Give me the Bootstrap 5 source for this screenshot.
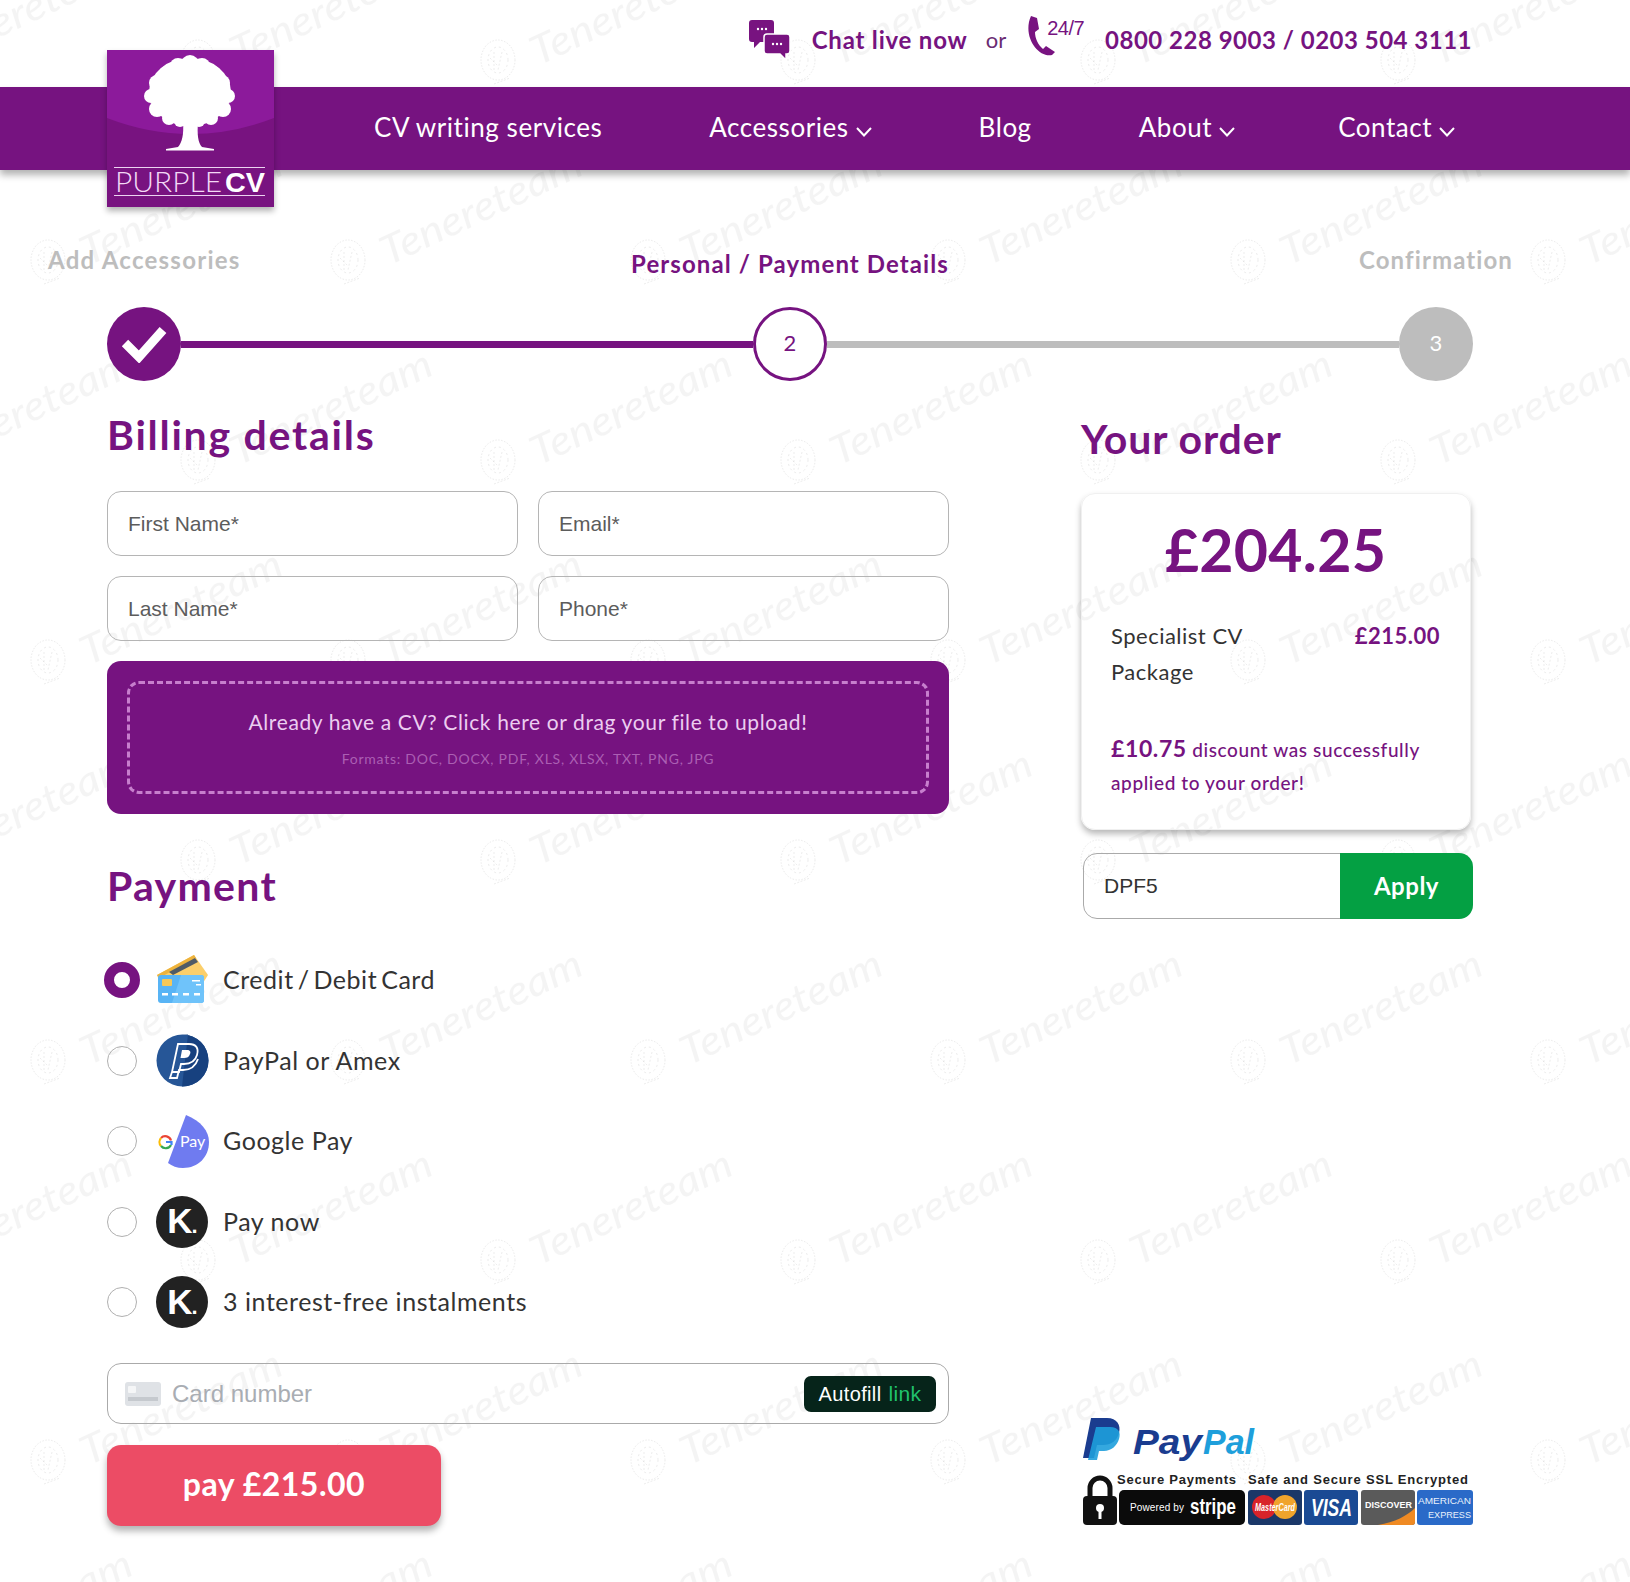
<!DOCTYPE html>
<html lang="en">
<head>
<meta charset="utf-8">
<title>PurpleCV checkout</title>
<link href="https://cdn.jsdelivr.net/npm/bootstrap@5.3.0/dist/css/bootstrap.min.css" rel="stylesheet">
<style>
:root{--pu:#761380;}
html,body{background:#fff;}
body{font-family:"Lato","Noto Sans",sans-serif;color:#333;width:1630px;height:1582px;overflow:hidden;}
.page-wrap{position:relative;z-index:0;height:1582px;overflow:hidden;}
.wm-layer{position:absolute;inset:0;z-index:-1;}
.topline{height:87px;padding:0 158px 8px 0;gap:21px;color:var(--pu);font-size:24px;}
.chat-txt{font-weight:700;letter-spacing:.8px;}
.or-txt{color:#6a2b72;font-size:22px;margin-left:-3px;}
.phone-ico{margin:-8px 0 0 -1px;}
.h247{font-family:"Liberation Sans",sans-serif;font-size:20px;letter-spacing:-.5px;margin:-24px 0 0 -30px;}
.phone-no{font-weight:700;font-size:24px;letter-spacing:.5px;}
.mainbar{height:83px;background:var(--pu);box-shadow:0 5px 7px rgba(0,0,0,.3);padding:0 0 2px 374px;}
.mainbar .nav{gap:107px;}
.mainbar .nav-link{color:#fff;font-size:26px;padding:0;line-height:1.2;display:flex;align-items:center;gap:7px;letter-spacing:.55px;}
.nav-end{margin-left:-4px;}
.logo-box{position:absolute;left:107px;top:50px;width:167px;height:157px;box-shadow:0 4px 6px rgba(0,0,0,.3);z-index:2;display:block;}
.step-labels{height:34px;margin-top:77px;padding-left:48px;padding-right:117px;font-size:24px;font-weight:700;color:#bdbdbd;letter-spacing:1.1px;}
.lbl-first{width:583px;margin-top:-8px;letter-spacing:1.25px;}
.lbl-mid{color:var(--pu);}
.lbl-last{margin-top:-8px;}
.stepper{height:74px;margin-top:26px;padding:0 157px 0 107px;}
.step-dot{width:74px;height:74px;border-radius:50%;flex:none;font-size:22px;}
.dot-done{background:var(--pu);}
.dot-now{border:3px solid var(--pu);color:var(--pu);padding-bottom:3px;}
.dot-todo{background:#bdbdbd;color:#fff;padding-bottom:3px;}
.step-line{height:7px;flex:1;background:var(--pu);}
.line-todo{background:#bdbdbd;}
.main-wrap{padding:0 157px 0 107px;margin-top:30px;height:1114px;}
.left-col{width:842px;}
.right-col{width:392px;}
.sec-title{font-size:41px;line-height:48px;font-weight:700;color:var(--pu);margin:0;letter-spacing:1.45px;}
.billing-title{letter-spacing:1.75px;}
.order-title{margin-top:4px;letter-spacing:.9px;}
.field-row{--bs-gutter-x:20px;--bs-gutter-y:20px;margin-top:12px;}
.field-box{height:65px;border-radius:14px;border:1px solid #b5b5b5;background:transparent;padding:0 20px;font-family:"Liberation Sans",sans-serif;font-size:21px;}
.field-box::placeholder{color:#5c5c5c;}
.upload-box{height:153px;margin-top:20px;background:var(--pu);border-radius:14px;padding:20px;color:#eccdf0;}
.upload-in{height:113px;border:3px dashed #c77fcd;border-radius:12px;}
.up-main{font-size:21px;letter-spacing:.62px;line-height:30px;}
.up-sub{font-size:14px;color:#ab5fb3;letter-spacing:.75px;margin-top:13px;line-height:18px;}
.pay-title{margin-top:48px;letter-spacing:1.3px;}
.pay-list{margin-top:42px;gap:24.5px;}
.pay-row{height:56px;}
.radio-cell{width:30px;flex:none;margin-right:19px;}
.radio-cell .form-check-input{width:30px;height:30px;margin:0;border:1px solid #b0b0b0;background-color:transparent;flex:none;}
.radio-cell .form-check-input:checked{width:36px;height:36px;margin:0 -3px;border:10px solid var(--pu);background:#fff;}
.pay-ico{width:53px;height:53px;flex:none;margin-right:14px;}
.pay-lbl{font-size:25px;letter-spacing:.55px;color:#333;}
.lbl-slash{word-spacing:-3px;}
.k-ico{width:52px;height:52px;margin-right:15px;flex:none;border-radius:50%;background:#222;color:#fff;font-family:"Liberation Sans",sans-serif;font-weight:700;font-size:35px;letter-spacing:-1px;}
.k-dot{font-size:22px;margin-top:8px;}
.stripe-field{height:61px;margin-top:33px;border:1px solid #aaa;border-radius:14px;padding:0 12px 0 17px;gap:11px;}
.cardnum{font-size:24px;font-family:"Liberation Sans",sans-serif;color:#a9adb3;}
.autofill{height:36px;width:132px;background:#06241a;border-radius:7px;color:#fff;font-size:20px;font-family:"Liberation Sans",sans-serif;letter-spacing:.35px;gap:7px;}
.autofill span{color:#20c26d;font-size:21px;}
.pay-btn{display:block;width:334px;height:81px;margin-top:21px;padding-bottom:10px;background:#ec4c65;border:0;border-radius:14px;color:#fff;font-size:32px;font-weight:700;box-shadow:0 5px 7px rgba(0,0,0,.3);letter-spacing:.5px;}
.pay-btn:hover{background:#ec4c65;color:#fff;}
.order-card{width:390px;height:337px;margin-top:30px;background:transparent;border:1px solid #f0f0f0;border-radius:14px;box-shadow:0 4px 6px rgba(0,0,0,.28);padding:20px 30px 0 29px;}
.grand{font-size:59px;line-height:72px;font-weight:700;color:var(--pu);text-align:center;letter-spacing:.3px;}
.line-item{margin-top:32px;font-size:22px;line-height:36px;letter-spacing:.5px;height:72px;}
.item-name{width:170px;}
.item-price{font-weight:700;color:var(--pu);letter-spacing:.5px;}
.disc{margin-top:43px;font-size:19px;line-height:33px;color:var(--pu);letter-spacing:.6px;font-weight:500;}
.disc b{font-size:23px;letter-spacing:.6px;line-height:1;}
.coupon{height:66px;margin-top:23px;margin-left:2px;width:390px;}
.coupon .form-control{height:66px;border:1px solid #aaa;border-radius:14px 0 0 14px;background:transparent;font-family:"Liberation Sans",sans-serif;font-size:21px;padding:0 20px;color:#333;}
.coupon .btn{width:133px;background:#04a043;border:0;border-radius:0 14px 14px 0;color:#fff;font-weight:700;font-size:24px;letter-spacing:.5px;flex:none;}
.trust{margin:auto 0 0 2px;width:390px;}
.trust-row{height:107px;display:block;width:390px;}
</style>
</head>
<body>
<div class="page-wrap">
  <svg class="wm-layer" width="1630" height="1582" aria-hidden="true">
    <defs>
      <g id="wm-text"><text transform="rotate(-25)" x="0" y="0" font-family="Lato,sans-serif" font-size="40" font-style="italic" textLength="218" lengthAdjust="spacingAndGlyphs" fill="#000" fill-opacity=".042">Tenereteam</text></g>
      <g id="wm-seal" fill="none" stroke="#000" stroke-opacity=".07"><ellipse cx="0" cy="-4" rx="17" ry="20" stroke-dasharray="1.5 1.5"/><ellipse cx="0" cy="-4" rx="10" ry="13" stroke-dasharray="2 3"/><path d="M-4 -12V8M4 -12L0 6M-8 -6L0 2" stroke-dasharray="2 2"/><path d="M-4 20L12 14" stroke-dasharray="2 1.5"/></g>
      <pattern id="wm-tile" width="300" height="400" patternUnits="userSpaceOnUse">
        <use href="#wm-seal" x="48" y="264"/><use href="#wm-text" x="88" y="266"/>
        <use href="#wm-seal" x="198" y="64"/><use href="#wm-text" x="238" y="66"/><use href="#wm-text" x="-62" y="66"/><use href="#wm-text" x="238" y="466"/><use href="#wm-text" x="-62" y="466"/>
      </pattern>
    </defs>
    <rect width="1630" height="1582" fill="url(#wm-tile)"/>
  </svg>

  <header>
    <div class="topline d-flex align-items-center justify-content-end">
      <svg width="42" height="40" viewBox="0 0 42 40" aria-hidden="true">
        <path d="M3 0H22a3 3 0 0 1 3 3V19a3 3 0 0 1-3 3H11L5 28V22H3a3 3 0 0 1-3-3V3a3 3 0 0 1 3-3z" fill="#781380"/>
        <path d="M18 14H38a3 3 0 0 1 3 3V31a3 3 0 0 1-3 3H37V40L31 34H18a3 3 0 0 1-3-3V17a3 3 0 0 1 3-3z" fill="#781380" stroke="#fff" stroke-width="1.5"/>
        <g fill="#fff"><circle cx="9" cy="9" r="1.2"/><circle cx="13" cy="9" r="1.2"/><circle cx="17" cy="9" r="1.2"/><circle cx="24" cy="24" r="1.2"/><circle cx="28" cy="24" r="1.2"/><circle cx="32" cy="24" r="1.2"/></g>
      </svg>
      <span class="chat-txt">Chat live now</span>
      <span class="or-txt">or</span>
      <svg class="phone-ico" width="30" height="40" viewBox="0 0 30 40" aria-hidden="true"><path d="M5 0L11 2L13 13L9 16C9 22 12 29 17 33L20 30L29 36L26 39C12 42-4 20 5 0z" fill="#781380"/></svg>
      <span class="h247">24/7</span>
      <span class="phone-no">0800 228 9003 / 0203 504 3111</span>
    </div>
    <nav class="mainbar d-flex align-items-center">
      <ul class="nav">
        <li class="nav-item"><a class="nav-link" href="#">CV writing services</a></li>
        <li class="nav-item"><a class="nav-link" href="#">Accessories <svg width="16" height="10" viewBox="0 0 16 10" class="mt-2"><path d="M1 1L8 8.5L15 1" fill="none" stroke="#fff" stroke-width="2"/></svg></a></li>
        <li class="nav-item"><a class="nav-link" href="#">Blog</a></li>
        <li class="nav-item"><a class="nav-link" href="#">About <svg width="16" height="10" viewBox="0 0 16 10" class="mt-2"><path d="M1 1L8 8.5L15 1" fill="none" stroke="#fff" stroke-width="2"/></svg></a></li>
        <li class="nav-item nav-end"><a class="nav-link" href="#">Contact <svg width="16" height="10" viewBox="0 0 16 10" class="mt-2"><path d="M1 1L8 8.5L15 1" fill="none" stroke="#fff" stroke-width="2"/></svg></a></li>
      </ul>
    </nav>
    <svg class="logo-box" viewBox="0 0 167 157" role="img" aria-label="PurpleCV">
      <rect width="167" height="157" fill="#8c1a9b"/>
      <path d="M0 68Q83 100 167 68V157H0z" fill="#781380"/>
      <g fill="#fff">
        <ellipse cx="83" cy="42" rx="41" ry="34"/>
        <circle cx="83" cy="14" r="9"/><circle cx="71" cy="16" r="8"/><circle cx="95" cy="16" r="8"/><circle cx="60" cy="24" r="8"/><circle cx="106" cy="24" r="8"/><circle cx="50" cy="33" r="8"/><circle cx="115" cy="33" r="8"/><circle cx="44" cy="46" r="7"/><circle cx="121" cy="46" r="7"/><circle cx="50" cy="59" r="8"/><circle cx="116" cy="59" r="8"/><circle cx="62" cy="68" r="7"/><circle cx="73" cy="71" r="6"/><circle cx="92" cy="71" r="6"/><circle cx="104" cy="68" r="7"/>
        <path d="M76 72H91C90 84 91 93 95 97L107 99V100.500H59V99L71 97C75 93 77 84 76 72z"/>
        <rect x="7" y="117" width="151" height="1" fill="#ecd3f1"/><rect x="7" y="145" width="151" height="1" fill="#ecd3f1"/>
      </g>
      <text x="8" y="142" font-family="Lato,sans-serif" font-weight="300" font-size="28" textLength="107" lengthAdjust="spacingAndGlyphs" fill="#f3d9f6">PURPLE</text>
      <text x="118" y="142" font-family="Liberation Sans,sans-serif" font-weight="700" font-size="28" textLength="40" lengthAdjust="spacingAndGlyphs" fill="#fff">CV</text>
    </svg>
  </header>

  <div class="step-labels d-flex align-items-center">
    <span class="lbl-first">Add Accessories</span>
    <span class="lbl-mid">Personal / Payment Details</span>
    <span class="lbl-last ms-auto">Confirmation</span>
  </div>
  <div class="stepper d-flex align-items-center">
    <div class="step-dot dot-done d-flex align-items-center justify-content-center">
      <svg width="46" height="38" viewBox="0 0 46 38"><path d="M4 18L18 32L42 5" fill="none" stroke="#fff" stroke-width="9"/></svg>
    </div>
    <div class="step-line"></div>
    <div class="step-dot dot-now d-flex align-items-center justify-content-center">2</div>
    <div class="step-line line-todo"></div>
    <div class="step-dot dot-todo d-flex align-items-center justify-content-center">3</div>
  </div>

  <main class="main-wrap d-flex justify-content-between">
    <section class="left-col">
      <h2 class="sec-title billing-title">Billing details</h2>
      <form class="row field-row">
        <div class="col-6"><input class="form-control field-box" placeholder="First Name*"></div>
        <div class="col-6"><input class="form-control field-box" placeholder="Email*"></div>
        <div class="col-6"><input class="form-control field-box" placeholder="Last Name*"></div>
        <div class="col-6"><input class="form-control field-box" placeholder="Phone*"></div>
      </form>
      <div class="upload-box">
        <div class="upload-in d-flex flex-column align-items-center justify-content-center">
          <div class="up-main">Already have a CV? Click here or drag your file to upload!</div>
          <div class="up-sub">Formats: DOC, DOCX, PDF, XLS, XLSX, TXT, PNG, JPG</div>
        </div>
      </div>
      <h2 class="sec-title pay-title">Payment</h2>
      <div class="pay-list d-flex flex-column">
        <label class="pay-row d-flex align-items-center">
          <span class="radio-cell d-flex justify-content-center"><input class="form-check-input" type="radio" name="pm" checked></span>
          <svg class="pay-ico" viewBox="0 0 53 53" aria-hidden="true">
            <path d="M1 21L38 1L52 21L40 40L6 34z" fill="#fbcf6b"/>
            <path d="M1 21L38 1L40 4L3 24z" fill="#eeb33c"/>
            <path d="M13 18L39 4L42 8L17 21z" fill="#4f5b66"/>
            <rect x="2" y="21" width="46" height="28" rx="3" fill="#58b4f5"/>
            <path d="M25 21H45a3 3 0 0 1 3 3V46a3 3 0 0 1-3 3H16z" fill="#6fc3fa"/>
            <rect x="6" y="25" width="10" height="7" rx="1" fill="#f6c858"/>
            <rect x="36" y="26" width="8" height="1.5" fill="#fff"/><rect x="40" y="30" width="5" height="1.5" fill="#fff"/>
            <g fill="#fff"><rect x="6" y="39" width="6" height="2.5"/><rect x="16" y="39" width="6" height="2.5"/><rect x="27" y="39" width="6" height="2.5"/><rect x="38" y="39" width="6" height="2.5"/></g>
          </svg>
          <span class="pay-lbl lbl-slash">Credit / Debit Card</span>
        </label>
        <label class="pay-row d-flex align-items-center">
          <span class="radio-cell d-flex justify-content-center"><input class="form-check-input" type="radio" name="pm"></span>
          <svg class="pay-ico" viewBox="0 0 53 53" aria-hidden="true">
            <circle cx="26.5" cy="26.5" r="26" fill="#265697"/>
            <path d="M26.500.5a26 26 0 0 1 0 52H26L32 .5z" fill="#17417f"/>
            <path d="M22 10H33C40 10 43 14 41 21C39 28 34 30 28 30H25L23 38H16z" fill="none" stroke="#fff" stroke-width="1.8"/>
            <path d="M16 38L14 44H21L23 36H27C35 36 40 31 42 25" fill="none" stroke="#fff" stroke-width="1.8"/>
            <path d="M26 16H31C34 16 35 18 34 20C33 23 31 24 28 24H24.500z" fill="#fff"/>
          </svg>
          <span class="pay-lbl">PayPal or Amex</span>
        </label>
        <label class="pay-row d-flex align-items-center">
          <span class="radio-cell d-flex justify-content-center"><input class="form-check-input" type="radio" name="pm"></span>
          <svg class="pay-ico" viewBox="0 0 53 53" aria-hidden="true">
            <path d="M30 0C45 6 53 16 53 27C53 42 42 53 27 53C21 53 16 51 12 48z" fill="#6f7bf0"/>
            <path d="M15 25.500A6 6 0 0 0 5 23" fill="none" stroke="#ea4335" stroke-width="2.200"/>
            <path d="M5 23A6 6 0 0 0 5 31" fill="none" stroke="#fbbc05" stroke-width="2.200"/>
            <path d="M5 31A6 6 0 0 0 15 30" fill="none" stroke="#34a853" stroke-width="2.200"/>
            <path d="M15.500 30V27H10" fill="none" stroke="#4285f4" stroke-width="2.200"/>
            <text x="24" y="32" font-family="Lato,sans-serif" font-size="16" fill="#fff">Pay</text>
          </svg>
          <span class="pay-lbl">Google Pay</span>
        </label>
        <label class="pay-row d-flex align-items-center">
          <span class="radio-cell d-flex justify-content-center"><input class="form-check-input" type="radio" name="pm"></span>
          <span class="k-ico d-flex align-items-center justify-content-center">K<span class="k-dot">.</span></span>
          <span class="pay-lbl">Pay now</span>
        </label>
        <label class="pay-row d-flex align-items-center">
          <span class="radio-cell d-flex justify-content-center"><input class="form-check-input" type="radio" name="pm"></span>
          <span class="k-ico d-flex align-items-center justify-content-center">K<span class="k-dot">.</span></span>
          <span class="pay-lbl">3 interest-free instalments</span>
        </label>
      </div>
      <div class="stripe-field d-flex align-items-center">
        <svg width="36" height="24" viewBox="0 0 36 24" aria-hidden="true"><rect width="36" height="24" rx="3" fill="#dfe2e6"/><rect x="3" y="4" width="8" height="7" rx="1" fill="#f5f6f7"/><rect x="3" y="15" width="30" height="4" fill="#c5c9ce"/></svg>
        <span class="cardnum">Card number</span>
        <span class="autofill ms-auto d-flex align-items-center justify-content-center">Autofill <span>link</span></span>
      </div>
      <button class="btn pay-btn" type="button">pay £215.00</button>
    </section>

    <aside class="right-col d-flex flex-column">
      <h2 class="sec-title order-title">Your order</h2>
      <div class="card order-card">
        <div class="grand">£204.25</div>
        <div class="line-item d-flex justify-content-between">
          <div class="item-name">Specialist CV Package</div>
          <div class="item-price">£215.00</div>
        </div>
        <div class="disc"><b>£10.75</b> discount was successfully applied to your order!</div>
      </div>
      <div class="input-group coupon">
        <input class="form-control" value="DPF5" aria-label="Coupon code">
        <button class="btn" type="button">Apply</button>
      </div>
      <div class="trust">
        <svg class="trust-row" viewBox="0 0 390 107" role="img" aria-label="PayPal. Secure payments powered by Stripe. Safe and secure SSL encrypted">
          <path d="M8 0H24C34 0 38 7 36 15C34 23 28 27 20 27H14L11 40H0z" fill="#1a3c8f"/>
          <path d="M13 9H27C36 9 38 15 36 21C34 28 28 33 21 33H16L14 42H5z" fill="#1e9fdb" fill-opacity=".9"/>
          <text x="50" y="36" font-family="Liberation Sans,sans-serif" font-weight="700" font-style="italic" font-size="35" textLength="69" lengthAdjust="spacingAndGlyphs" fill="#1a3c8f">Pay</text>
          <text x="120" y="36" font-family="Liberation Sans,sans-serif" font-weight="700" font-style="italic" font-size="35" textLength="51" lengthAdjust="spacingAndGlyphs" fill="#1e9fdb">Pal</text>
          <path d="M7 78V70a10 10 0 0 1 20 0V78" fill="none" stroke="#111" stroke-width="5"/>
          <rect x="0" y="78" width="34" height="29" rx="4" fill="#111"/>
          <circle cx="17" cy="90" r="4" fill="#fff"/><rect x="15.500" y="91" width="3" height="10" fill="#fff"/>
          <text x="34" y="66" font-family="Liberation Sans,sans-serif" font-weight="700" font-size="13" textLength="119" fill="#222">Secure Payments</text>
          <text x="165" y="66" font-family="Liberation Sans,sans-serif" font-weight="700" font-size="13" textLength="220" fill="#222">Safe and Secure SSL Encrypted</text>
          <rect x="36" y="72" width="126" height="35" rx="5" fill="#0b0b0b"/>
          <text x="47" y="93" font-family="Liberation Sans,sans-serif" font-size="10" textLength="54" fill="#fff">Powered by</text>
          <text x="107" y="96" font-family="Liberation Sans,sans-serif" font-weight="700" font-size="22" textLength="46" lengthAdjust="spacingAndGlyphs" fill="#fff">stripe</text>
          <rect x="165" y="72" width="54" height="35" rx="3" fill="#1a3768"/>
          <circle cx="181" cy="89" r="12" fill="#d8232a"/><circle cx="202" cy="89" r="12" fill="#f0a42c"/>
          <text x="172" y="93" font-family="Liberation Sans,sans-serif" font-weight="700" font-style="italic" font-size="10" textLength="40" lengthAdjust="spacingAndGlyphs" fill="#fff">MasterCard</text>
          <rect x="221" y="72" width="54" height="35" rx="3" fill="#1a4a94"/>
          <text x="228" y="98" font-family="Liberation Sans,sans-serif" font-weight="700" font-style="italic" font-size="23" textLength="41" lengthAdjust="spacingAndGlyphs" fill="#fff">VISA</text>
          <rect x="278" y="72" width="54" height="35" rx="3" fill="#5a5a5a"/>
          <path d="M332 90V104a3 3 0 0 1-3 3H295C312 104 324 98 332 90z" fill="#ef8a23"/>
          <text x="282" y="90" font-family="Liberation Sans,sans-serif" font-weight="700" font-size="8.500" textLength="47" lengthAdjust="spacingAndGlyphs" fill="#fff">DISCOVER</text>
          <rect x="334" y="72" width="56" height="35" rx="3" fill="#2a6ac8"/>
          <text x="335" y="86" font-family="Liberation Sans,sans-serif" font-size="9" textLength="53" lengthAdjust="spacingAndGlyphs" fill="#e8f1fb">AMERICAN</text>
          <text x="345" y="100" font-family="Liberation Sans,sans-serif" font-size="8.500" textLength="43" lengthAdjust="spacingAndGlyphs" fill="#e8f1fb">EXPRESS</text>
        </svg>
      </div>
    </aside>
  </main>
</div>
</body>
</html>
